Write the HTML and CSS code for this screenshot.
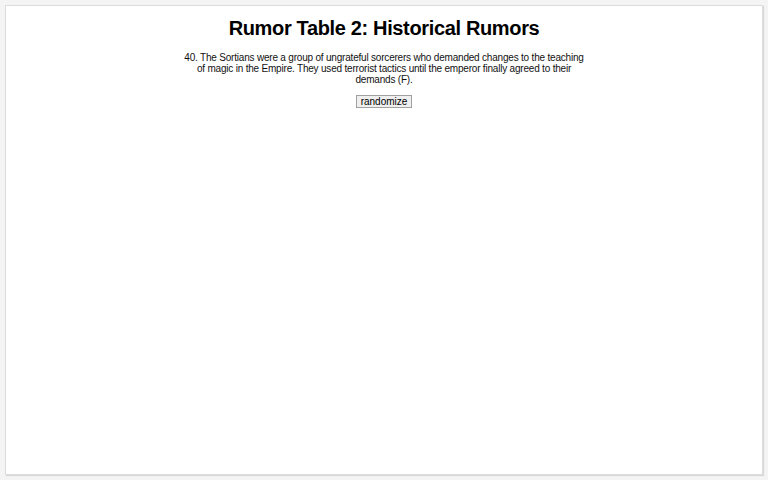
FILE: index.html
```html
<!DOCTYPE html>
<html>
<head>
<meta charset="utf-8">
<link rel="stylesheet" href="styles.css">
</head>
<body>
<div class="card">
  <h1 class="title">Rumor Table 2: Historical Rumors</h1>
  <p class="rumor">40. The Sortians were a group of ungrateful sorcerers who demanded changes to the teaching of magic in the Empire. They used terrorist tactics until the emperor finally agreed to their demands (F).</p>
  <div class="actions"><button class="btn" type="button">randomize</button></div>
</div>
</body>
</html>
```
FILE: styles.css
```css
html, body {
  margin: 0;
  padding: 0;
  height: 100%;
}
body {
  background: #f4f4f4;
  font-family: "Liberation Sans", Arial, sans-serif;
  color: #000;
  padding: 5px;
  box-sizing: border-box;
}
.card {
  background: #fff;
  border: 1px solid #dcdcdc;
  box-shadow: 1px 1px 1px #d8d8d8;
  height: 100%;
  box-sizing: border-box;
  display: flex;
  flex-direction: column;
  align-items: center;
}
.title {
  font-size: 20px;
  letter-spacing: -0.35px;
  font-weight: bold;
  margin: 11px 0 0 0;
  line-height: 23px;
}
.rumor {
  width: 400px;
  text-align: center;
  font-size: 10px;
  letter-spacing: -0.2px;
  line-height: 11px;
  margin: 12px 0 0 0;
  color: #111;
}
.actions {
  margin-top: 6px;
}
.btn {
  font-family: "Liberation Sans", Arial, sans-serif;
  font-size: 10px;
  padding: 0 4px;
  background: #efefef;
  border: 1px solid #a0a0a0;
  border-radius: 0;
  color: #000;
  line-height: 11px;
}
```
